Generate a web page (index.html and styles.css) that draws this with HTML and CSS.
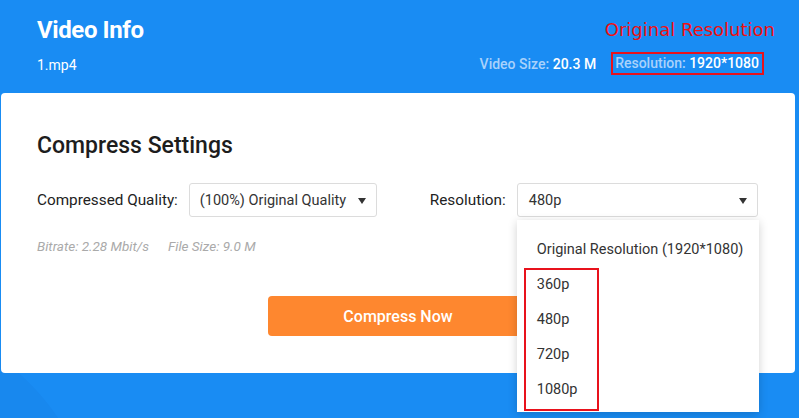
FILE: index.html
```html
<!DOCTYPE html>
<html>
<head>
<meta charset="utf-8">
<link rel="stylesheet" href="styles.css">
</head>
<body>
<div class="page">
  <div class="deco deco-bl"></div>
  <div class="deco deco-tr"></div>
  <header class="header">
    <div class="info">
      <h1 class="title">Video Info</h1>
      <div class="filename">1.mp4</div>
    </div>
    <div class="meta">
      <div class="note">Original Resolution</div>
      <div class="meta-line">
        <span class="meta-item"><span class="muted">Video Size:</span> <b>20.3 M</b></span>
        <span class="meta-item boxed"><span class="muted">Resolution:</span> <b>1920*1080</b></span>
      </div>
    </div>
  </header>
  <main class="card">
    <h2 class="card-title">Compress Settings</h2>
    <div class="row">
      <div class="field">
        <span class="label">Compressed Quality:</span>
        <div class="select select-quality"><span>(100%) Original Quality</span><i class="caret"></i></div>
      </div>
      <div class="field field-res">
        <span class="label">Resolution:</span>
        <div class="select-wrap">
          <div class="select select-res"><span>480p</span><i class="caret"></i></div>
          <ul class="menu">
            <li>Original Resolution (1920*1080)</li>
            <li>360p</li>
            <li>480p</li>
            <li>720p</li>
            <li>1080p</li>
            <div class="menu-mark"></div>
          </ul>
        </div>
      </div>
    </div>
    <div class="stats"><span>Bitrate: 2.28 Mbit/s</span><span>File Size: 9.0 M</span></div>
    <div class="actions"><button class="btn">Compress Now</button></div>
  </main>
</div>
</body>
</html>
```
FILE: styles.css
```css
* { box-sizing: border-box; }
html, body { margin: 0; padding: 0; }
body {
  width: 799px;
  height: 418px;
  overflow: hidden;
  background: #198cf3;
  font-family: Roboto, "Liberation Sans", sans-serif;
}
.page { position: relative; width: 799px; height: 418px; overflow: hidden; }
.deco { position: absolute; border-radius: 50%; }
.deco-bl { left: -402px; top: 308px; width: 504px; height: 504px; background: rgba(0, 40, 120, 0.035); }
.deco-tr { left: 780px; top: -200px; width: 220px; height: 220px; background: rgba(255, 255, 255, 0.04); }

.header {
  position: relative;
  height: 93px;
  display: flex;
  justify-content: space-between;
  padding: 0 35px 0 37px;
  color: #fff;
}
.title { margin: 16px 0 0; font-size: 24px; font-weight: 700; line-height: 28px; letter-spacing: -0.4px; }
.filename { margin-top: 13px; font-size: 14px; line-height: 16px; }
.meta { display: flex; flex-direction: column; align-items: flex-end; }
.note {
  margin-top: 18px;
  margin-right: -11px;
  font-family: "DejaVu Sans", sans-serif;
  color: #f01010;
  font-size: 18px;
  line-height: 24px;
}
.meta-line { display: flex; align-items: center; gap: 15px; margin-top: 10px; font-size: 14px; font-weight: 500; }
.meta-item b { font-weight: 500; color: #fff; }
.muted { color: #a9d2fb; }
.boxed { border: 2px solid #e8121c; padding: 1px 3px 2px 2px; }

.card {
  position: relative;
  margin-left: 1px;
  width: 794px;
  height: 280px;
  background: #fff;
  border-radius: 4px;
  padding: 0 0 0 36px;
}
.card-title {
  margin: 0;
  padding-top: 39px;
  font-size: 23px;
  font-weight: 500;
  line-height: 28px;
  color: #1d1d1d;
}
.row { display: flex; margin-top: 23px; }
.field { display: flex; align-items: center; }
.field-res { margin-left: 53px; }
.label { font-size: 15.3px; color: #222; margin-right: 11px; }
.select {
  position: relative;
  height: 34px;
  border: 1px solid #dcdcdc;
  border-radius: 3px;
  display: flex;
  align-items: center;
  padding-left: 10px;
  font-size: 14.5px;
  color: #333;
  background: #fff;
}
.select-quality { width: 188px; }
.select-res { width: 241px; padding-left: 11px; }
.caret {
  position: absolute;
  right: 10px;
  top: 14px;
  width: 0; height: 0;
  border-left: 4.5px solid transparent;
  border-right: 4.5px solid transparent;
  border-top: 6px solid #333;
}
.select-wrap { position: relative; }
.menu {
  position: absolute;
  left: 0;
  top: 37px;
  width: 242px;
  height: 192px;
  margin: 0;
  padding: 12px 0 0 20px;
  list-style: none;
  background: #fff;
  box-shadow: 0 2px 9px rgba(0, 0, 0, 0.18);
  z-index: 5;
}
.menu li { height: 35px; line-height: 35px; font-size: 14.5px; color: #333; }
.menu-mark {
  position: absolute;
  left: 7px;
  top: 48px;
  width: 75px;
  height: 143px;
  border: 2px solid #e8121c;
}
.stats {
  display: flex;
  gap: 19px;
  margin-top: 21px;
  font-size: 13.5px;
  font-style: italic;
  color: #aaa;
}
.actions { display: flex; margin-top: 42px; padding-left: 231px; }
.btn {
  width: 260px;
  height: 40px;
  border: none;
  border-radius: 4px;
  background: #fe872f;
  color: #fff;
  font-family: Roboto, "Liberation Sans", sans-serif;
  font-size: 16px;
  font-weight: 500;
}
```
